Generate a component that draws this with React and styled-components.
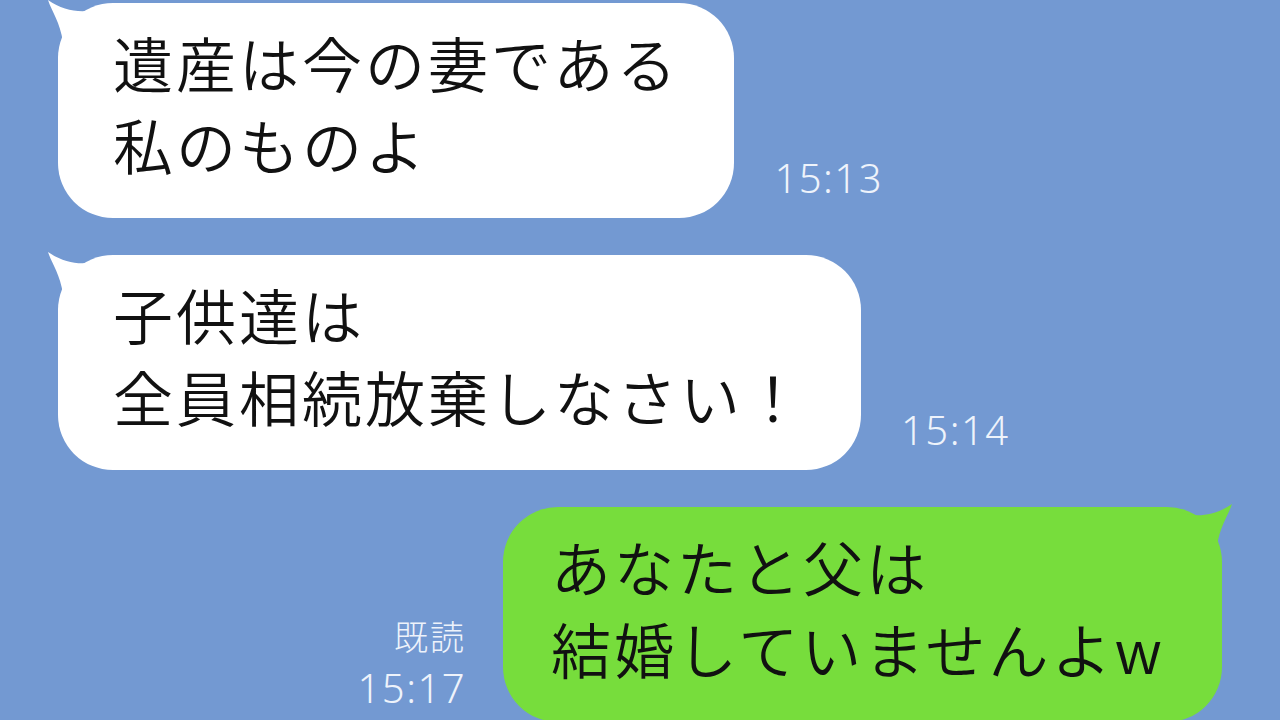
import React from "react";
import styled, { createGlobalStyle } from "styled-components";

const Global = createGlobalStyle`
  html, body { margin: 0; padding: 0; }
  body {
    width: 1280px;
    height: 720px;
    overflow: hidden;
    background: #7399d2;
    font-family: "Noto Sans CJK JP", "Noto Sans", sans-serif;
  }
`;

const Screen = styled.div`
  width: 1280px;
  height: 720px;
  background: #7399d2;
  display: flex;
  flex-direction: column;
  gap: 37px;
  padding-top: 3px;
  box-sizing: border-box;
  overflow: hidden;
`;

const Row = styled.div`
  display: flex;
  align-items: flex-end;
  justify-content: ${(p) => (p.$mine ? "flex-end" : "flex-start")};
  gap: ${(p) => (p.$mine ? "37px" : "40px")};
  padding: ${(p) => (p.$mine ? "0 58px 0 0" : "0 0 0 58px")};
`;

const Bubble = styled.div`
  position: relative;
  flex: none;
  background: ${(p) => (p.$mine ? "#77dd3c" : "#ffffff")};
  border-radius: 55px;
  padding: ${(p) => (p.$mine ? "18px 57px 33px 48px" : "18px 55px 33px 55px")};
  font-family: "Noto Sans CJK JP", sans-serif;
  font-size: 60px;
  font-weight: 350;
  line-height: 82px;
  letter-spacing: 3px;
  color: #111;
  white-space: pre;
`;

const Tail = styled.svg`
  position: absolute;
  top: -8px;
  ${(p) => (p.$mine ? "right: -14px; transform: scaleX(-1);" : "left: -14px;")}
  width: 60px;
  height: 60px;
  overflow: visible;
`;

const Meta = styled.div`
  display: flex;
  flex-direction: column;
  align-items: flex-end;
  color: #eef3fb;
  margin-bottom: ${(p) => p.$offset}px;
`;

const ReadMark = styled.span`
  font-family: "Noto Sans CJK JP", sans-serif;
  font-size: 34px;
  line-height: normal;
  font-weight: 300;
  letter-spacing: 2px;
`;

const Time = styled.span`
  font-family: "Noto Sans", "Noto Sans CJK JP", sans-serif;
  font-size: 40px;
  line-height: normal;
  font-weight: 300;
  letter-spacing: 1.5px;
`;

function BubbleTail({ mine, color }) {
  return (
    <Tail $mine={mine} viewBox="-14 -8 60 60">
      <path
        d="M-10,-3 C-6,9 2,19 5,39 L42,39 L42,5 C27,11 7,9 -10,-3 Z"
        fill={color}
      />
    </Tail>
  );
}

function Message({ mine, text, time, read, offset }) {
  const bubble = (
    <Bubble $mine={mine}>
      <BubbleTail mine={mine} color={mine ? "#77dd3c" : "#ffffff"} />
      {text}
    </Bubble>
  );
  const meta = (
    <Meta $offset={offset}>
      {read && <ReadMark>既読</ReadMark>}
      <Time>{time}</Time>
    </Meta>
  );
  return (
    <Row $mine={mine}>
      {mine ? (
        <>
          {meta}
          {bubble}
        </>
      ) : (
        <>
          {bubble}
          {meta}
        </>
      )}
    </Row>
  );
}

export default function App() {
  return (
    <>
      <Global />
      <Screen>
        <Message text={"遺産は今の妻である\n私のものよ"} time="15:13" offset={13} />
        <Message text={"子供達は\n全員相続放棄しなさい！"} time="15:14" offset={13} />
        <Message mine read text={"あなたと父は\n結婚していませんよw"} time="15:17" offset={7} />
      </Screen>
    </>
  );
}
